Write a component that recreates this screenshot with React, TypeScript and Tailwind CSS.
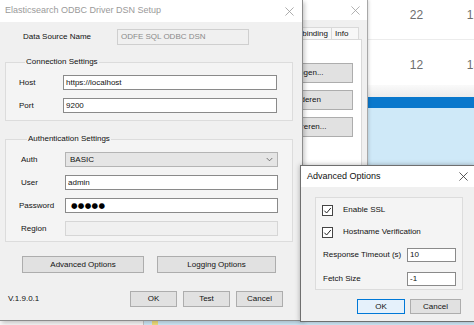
import React from "react";

function XIcon({ color = "#9a9a9a", size = 9 }: { color?: string; size?: number }) {
  return (
    <svg width={size} height={size} viewBox="0 0 10 10" fill="none">
      <path d="M0.5 0.5 L9.5 9.5 M9.5 0.5 L0.5 9.5" stroke={color} strokeWidth="0.9" />
    </svg>
  );
}

function Check() {
  return (
    <div className="w-[11px] h-[11px] bg-white border border-[#444] flex items-center justify-center">
      <svg width="9" height="9" viewBox="0 0 10 10" fill="none">
        <path d="M1.5 5.2 L4 7.8 L8.7 2.2" stroke="#222" strokeWidth="1.1" />
      </svg>
    </div>
  );
}

function Btn({ children, className = "" }: { children: React.ReactNode; className?: string }) {
  return (
    <div
      className={
        "flex items-center justify-center bg-[#e1e1e1] border border-[#adadad] text-[8px] text-[#111] whitespace-nowrap " +
        className
      }
    >
      {children}
    </div>
  );
}

function Row({ label, children }: { label: string; children: React.ReactNode }) {
  return (
    <div className="flex items-center h-[15px]">
      <span className="w-[44px] text-[8px] text-[#111]">{label}</span>
      {children}
    </div>
  );
}

export default function App() {
  return (
    <div className="relative w-[474px] h-[325px] overflow-hidden bg-white font-['Liberation_Sans',Arial,sans-serif]">
      {/* desktop background: calendar app */}
      <div className="absolute inset-0 flex">
        <div className="w-[144px] shrink-0 bg-[#f6f6f6] border-r border-[#c4c4c4]" />
        <div className="flex-1 min-w-0 flex flex-col bg-white overflow-hidden">
          <div className="h-[40px] shrink-0 border-b border-[#ececec] flex pt-[9px] pl-[244px] text-[12px] leading-[12px] text-[#6e6e6e]">
            <span className="w-[57px] shrink-0 text-center">22</span>
            <span className="w-[57px] shrink-0 text-center">12</span>
          </div>
          <div className="h-[45px] shrink-0 flex pt-[19px] pl-[244px] text-[12px] leading-[12px] text-[#6e6e6e]">
            <span className="w-[57px] shrink-0 text-center">12</span>
            <span className="w-[57px] shrink-0 text-center">13</span>
          </div>
          <div className="h-[12px] shrink-0 bg-gradient-to-b from-[#fafafa] to-[#ececec]" />
          <div className="h-[11px] shrink-0 bg-[#0a78cc]" />
          <div className="flex-1 bg-[#cfe9f8] flex flex-col justify-end">
            <div className="ml-[8px] w-[6px] h-[5px] bg-[#f1e07a]" />
          </div>
        </div>
      </div>

      {/* behind window */}
      <div className="absolute left-[180px] top-0 w-[188px] h-[200px] bg-[#f0f0f0] border-r border-[#a8a8a8] shadow-[1px_0_3px_rgba(0,0,0,0.15)] flex flex-col">
        <div className="h-[20px] bg-white flex items-center justify-end pr-[7px]">
          <XIcon color="#a0a0a0" />
        </div>
        <div className="flex justify-end pr-[8px] mt-[7px] h-[12px] text-[8px] leading-[10px] text-[#111]">
          <div className="border border-[#d9d9d9] border-b-0 bg-[#f7f7f7] px-[3px] flex items-center">Verbinding</div>
          <div className="border border-[#d9d9d9] border-b-0 border-l-0 bg-[#f7f7f7] w-[27px] pl-[3px] flex items-center">Info</div>
        </div>
        <div className="flex-1 ml-[4px] mr-[5px] bg-white border border-[#d9d9d9] flex flex-col items-end pr-[8px] pt-[23px] gap-[7px]">
          <Btn className="w-[106px] h-[20px]">Instellingen...</Btn>
          <Btn className="w-[106px] h-[20px]">Verwijderen</Btn>
          <Btn className="w-[106px] h-[20px]">Configureren...</Btn>
        </div>
      </div>

      {/* main dialog */}
      <div className="absolute left-0 top-0 w-[303px] h-[321px] bg-[#f0f0f0] border-r border-b border-[#8c8c8c] shadow-[2px_2px_4px_rgba(0,0,0,0.2)] flex flex-col">
        <div className="h-[22px] shrink-0 bg-white flex items-center justify-between pl-[5px] pr-[8px] text-[9px] text-[#9a9a9a]">
          <span>Elasticsearch ODBC Driver DSN Setup</span>
          <XIcon />
        </div>
        <div className="flex flex-col pl-[5px] pr-[9px]">
          <div className="mt-[7px] flex items-center h-[16px]">
            <span className="w-[112px] pl-[18px] text-[8px] text-[#111]">Data Source Name</span>
            <div className="w-[132px] h-[16px] bg-[#f0f0f0] border border-[#cfcfcf] flex items-center pl-[3px] text-[8px] text-[#8a8a8a]">
              ODFE SQL ODBC DSN
            </div>
          </div>

          <fieldset className="mt-[12px] border border-[#dcdcdc] bg-[#f4f4f4] pl-[13px] pr-[15px] pt-[8px] pb-[7px] flex flex-col gap-[8px]">
            <legend className="ml-[6px] px-[1px] text-[8px] leading-[10px] text-[#111]">Connection Settings</legend>
            <Row label="Host">
              <div className="flex-1 h-[15px] bg-white border border-[#8a8a8a] flex items-center pl-[2px] text-[8px] text-[#111]">
                https://localhost
              </div>
            </Row>
            <Row label="Port">
              <div className="flex-1 h-[15px] bg-white border border-[#8a8a8a] flex items-center pl-[2px] text-[8px] text-[#111]">
                9200
              </div>
            </Row>
          </fieldset>

          <fieldset className="mt-[13px] border border-[#dcdcdc] bg-[#f4f4f4] pl-[15px] pr-[14px] pt-[8px] pb-[5px] flex flex-col gap-[8px]">
            <legend className="ml-[6px] px-[1px] text-[8px] leading-[10px] text-[#111]">Authentication Settings</legend>
            <Row label="Auth">
              <div className="flex-1 h-[15px] bg-[#e5e5e5] border border-[#b4b4b4] flex items-center justify-between pl-[4px] pr-[4px] text-[8px] text-[#111]">
                <span>BASIC</span>
                <svg width="7" height="5" viewBox="0 0 8 5" fill="none">
                  <path d="M0.8 0.8 L4 4 L7.2 0.8" stroke="#555" strokeWidth="0.9" />
                </svg>
              </div>
            </Row>
            <Row label="User">
              <div className="flex-1 h-[15px] bg-white border border-[#8a8a8a] flex items-center pl-[2px] text-[8px] text-[#111]">
                admin
              </div>
            </Row>
            <div className="flex items-center h-[15px]">
              <span className="w-[44px] -ml-[2px] mr-[2px] text-[8px] text-[#111]">Password</span>
              <div className="flex-1 h-[15px] bg-white border border-[#8a8a8a] flex items-center pl-[5px] text-[7.5px] leading-[8px] tracking-[0.3px] text-black font-['DejaVu_Sans',sans-serif]">
                ●●●●●
              </div>
            </div>
            <Row label="Region">
              <div className="flex-1 h-[15px] bg-[#f0f0f0] border border-[#d6d6d6]" />
            </Row>
          </fieldset>

          <div className="mt-[14px] flex h-[17px]">
            <Btn className="ml-[17px] w-[122px] h-[17px]">Advanced Options</Btn>
            <Btn className="ml-[13px] w-[119px] h-[17px]">Logging Options</Btn>
          </div>

          <div className="mt-[18px] flex items-center h-[16px]">
            <span className="pl-[3px] w-[125px] text-[8px] text-[#111]">V.1.9.0.1</span>
            <div className="flex gap-[6px]">
              <Btn className="w-[47px] h-[16px]">OK</Btn>
              <Btn className="w-[47px] h-[16px]">Test</Btn>
              <Btn className="w-[47px] h-[16px]">Cancel</Btn>
            </div>
          </div>
        </div>
      </div>

      {/* advanced options dialog */}
      <div className="absolute left-[300px] top-[165px] w-[175px] h-[157px] bg-[#f0f0f0] border border-[#6f6f6f] shadow-[0_0_5px_rgba(0,0,0,0.3)] flex flex-col">
        <div className="h-[21px] shrink-0 bg-white flex items-center justify-between pl-[6px] pr-[6px] text-[9px] text-[#111]">
          <span>Advanced Options</span>
          <XIcon color="#333" />
        </div>
        <div className="flex flex-col pl-[14px]">
          <div className="mt-[10px] w-[148px] h-[93px] border border-[#dcdcdc] bg-[#f4f4f4] flex flex-col pl-[6px] pt-[6px] gap-[10px]">
            <div className="flex items-center h-[12px]">
              <Check />
              <span className="ml-[10px] text-[8px] text-[#111]">Enable SSL</span>
            </div>
            <div className="flex items-center h-[12px]">
              <Check />
              <span className="ml-[10px] text-[8px] text-[#111]">Hostname Verification</span>
            </div>
            <div className="flex items-center h-[14px]">
              <span className="w-[85px] pl-[1px] text-[8px] text-[#111]">Response Timeout (s)</span>
              <div className="w-[49px] h-[14px] bg-white border border-[#8a8a8a] flex items-center pl-[2px] text-[8px] text-[#111]">10</div>
            </div>
            <div className="flex items-center h-[14px]">
              <span className="w-[85px] pl-[1px] text-[8px] text-[#111]">Fetch Size</span>
              <div className="w-[49px] h-[14px] bg-white border border-[#8a8a8a] flex items-center pl-[2px] text-[8px] text-[#111]">-1</div>
            </div>
          </div>
          <div className="mt-[9px] flex h-[15px] pl-[42px] gap-[5px]">
            <Btn className="w-[48px] h-[15px] !border-[#0078d7] !bg-[#e5f1fb]">OK</Btn>
            <Btn className="w-[51px] h-[15px]">Cancel</Btn>
          </div>
        </div>
      </div>
    </div>
  );
}
